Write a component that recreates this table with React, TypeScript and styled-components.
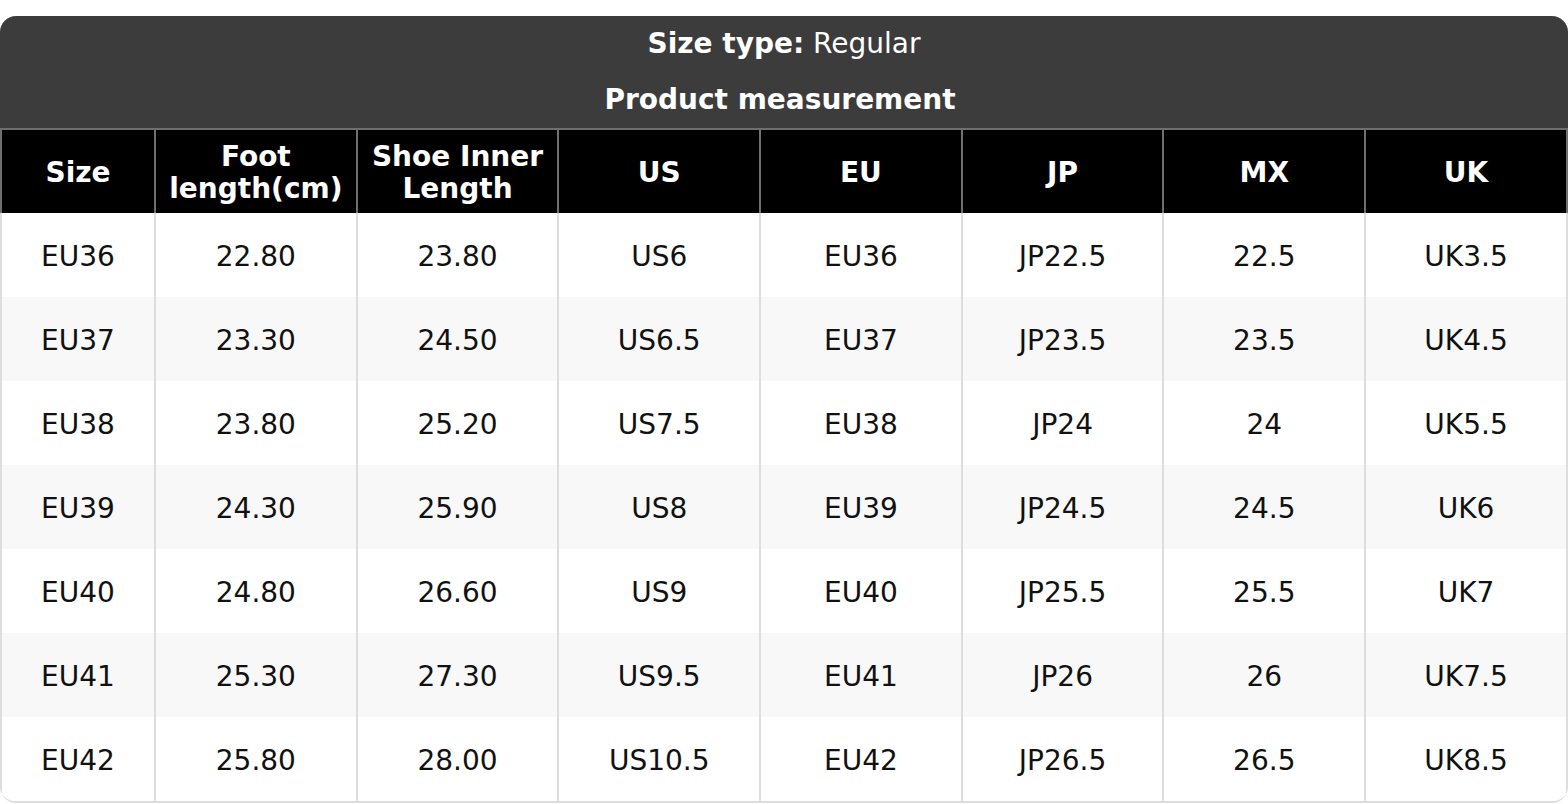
import React from "react";
import styled, { createGlobalStyle } from "styled-components";

const GlobalStyle = createGlobalStyle`
  html, body {
    margin: 0;
    padding: 0;
    background: #ffffff;
  }
  body {
    font-family: "DejaVu Sans", "Liberation Sans", sans-serif;
  }
  * {
    box-sizing: border-box;
  }
`;

const Page = styled.div`
  padding-top: 16px;
  width: 1568px;
`;

const ChartWrapper = styled.div`
  border-radius: 16px;
  overflow: hidden;
  border-bottom: 2px solid #dddddd;
  background: #ffffff;
`;

const Caption = styled.div`
  background: #3c3c3c;
  color: #ffffff;
`;

const CaptionLine = styled.div<{ $shift?: number }>`
  height: 56px;
  display: flex;
  align-items: center;
  justify-content: center;
  font-size: 28px;
  line-height: 32px;
  white-space: pre;
  padding-right: ${(p) => p.$shift ?? 0}px;
`;

const Strong = styled.span`
  font-weight: bold;
`;

const Row = styled.div<{ $head?: boolean; $shade?: boolean }>`
  display: grid;
  grid-template-columns: 154px repeat(6, 201.7px) 1fr;
  height: ${(p) => (p.$head ? "85px" : "84px")};
  background: ${(p) => (p.$head ? "#000000" : p.$shade ? "#f8f8f8" : "#ffffff")};
  border-top: ${(p) => (p.$head ? "2px solid #6f6f6f" : "none")};
`;

const Cell = styled.div<{ $head?: boolean; $last?: boolean }>`
  display: flex;
  align-items: center;
  justify-content: center;
  text-align: center;
  font-size: 28px;
  line-height: 32px;
  padding: ${(p) => (p.$head ? "2px 12px 0" : "3px 12px 0")};
  color: ${(p) => (p.$head ? "#ffffff" : "#111111")};
  font-weight: ${(p) => (p.$head ? "bold" : "normal")};
  border-left: 2px solid ${(p) => (p.$head ? "#6f6f6f" : "#dddddd")};
  border-right: ${(p) =>
    p.$last ? `2px solid ${p.$head ? "#6f6f6f" : "#dddddd"}` : "none"};
`;

const headers = [
  "Size",
  "Foot length(cm)",
  "Shoe Inner Length",
  "US",
  "EU",
  "JP",
  "MX",
  "UK",
];

const rows = [
  ["EU36", "22.80", "23.80", "US6", "EU36", "JP22.5", "22.5", "UK3.5"],
  ["EU37", "23.30", "24.50", "US6.5", "EU37", "JP23.5", "23.5", "UK4.5"],
  ["EU38", "23.80", "25.20", "US7.5", "EU38", "JP24", "24", "UK5.5"],
  ["EU39", "24.30", "25.90", "US8", "EU39", "JP24.5", "24.5", "UK6"],
  ["EU40", "24.80", "26.60", "US9", "EU40", "JP25.5", "25.5", "UK7"],
  ["EU41", "25.30", "27.30", "US9.5", "EU41", "JP26", "26", "UK7.5"],
  ["EU42", "25.80", "28.00", "US10.5", "EU42", "JP26.5", "26.5", "UK8.5"],
];

export default function App() {
  return (
    <Page>
      <GlobalStyle />
      <ChartWrapper>
        <Caption>
          <CaptionLine>
            <Strong>Size type:</Strong> Regular
          </CaptionLine>
          <CaptionLine $shift={8}>
            <Strong>Product measurement</Strong>
          </CaptionLine>
        </Caption>
        <Row $head>
          {headers.map((h, i) => (
            <Cell key={h} $head $last={i === headers.length - 1}>
              {h}
            </Cell>
          ))}
        </Row>
        {rows.map((r, ri) => (
          <Row key={r[0]} $shade={ri % 2 === 1}>
            {r.map((v, i) => (
              <Cell key={i} $last={i === r.length - 1}>
                {v}
              </Cell>
            ))}
          </Row>
        ))}
      </ChartWrapper>
    </Page>
  );
}
